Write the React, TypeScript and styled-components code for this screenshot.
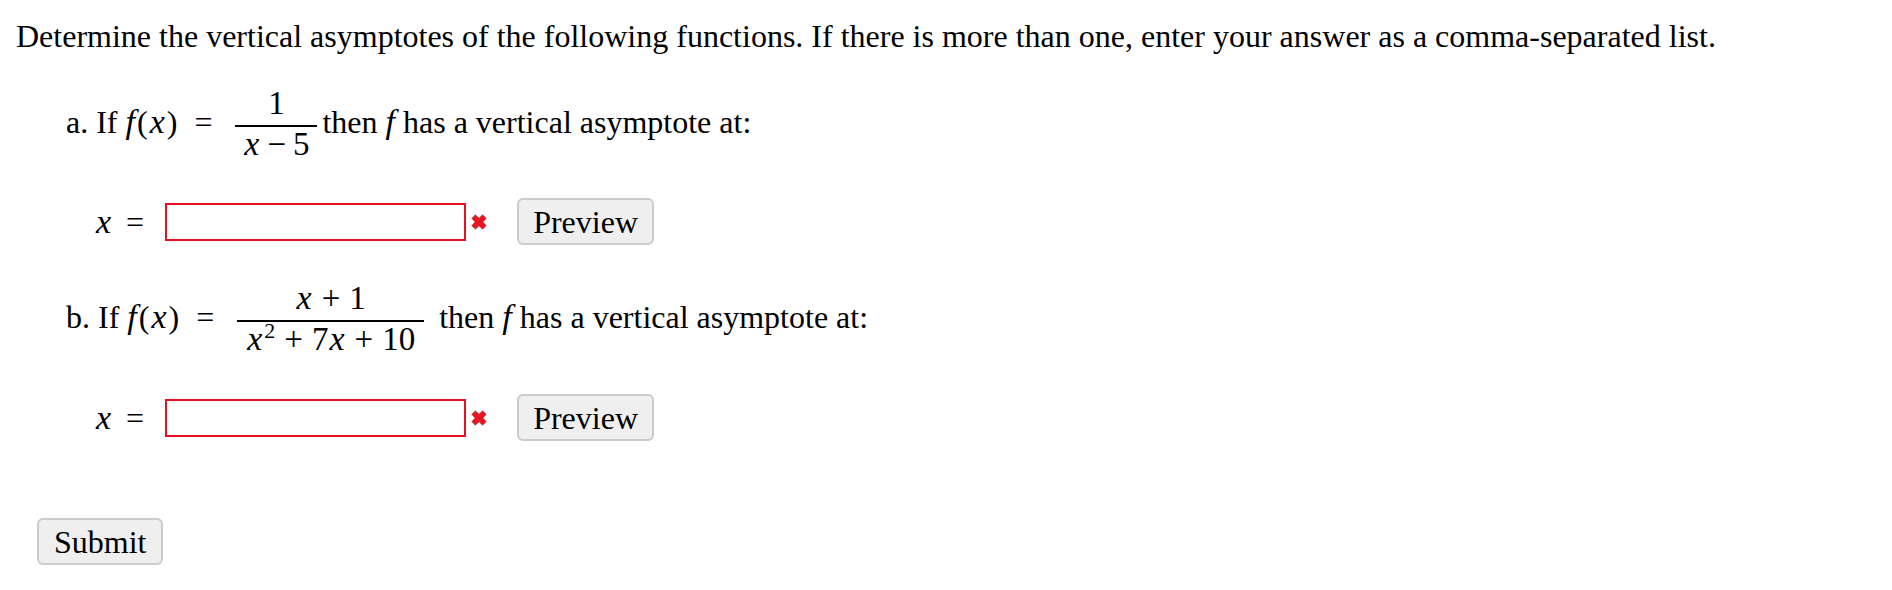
import React from "react"
import styled, { createGlobalStyle } from "styled-components"

const GlobalStyle = createGlobalStyle`
html, body {
    margin: 0;
    background: #fff;
}

body {
    font-family: "Liberation Serif", "Times New Roman", serif;
    font-size: 32px;
    color: #000;
}
`

const Page = styled.div`
    display: flex;
    flex-direction: column;
    align-items: flex-start;
    padding: 18px 16px 0;
`

const Intro = styled.p`
    margin: 0;
    line-height: 36px;
    white-space: nowrap;
`

const Part = styled.div<{ $top: number }>`
    margin-top: ${p => p.$top}px;
    padding-left: 50px;
    line-height: 36px;
    white-space: nowrap;
`

const Var = styled.i<{ $pad?: number }>`
    font-style: italic;
    font-size: 34px;
    margin: 0 ${p => p.$pad ?? 0}px;
`

const Paren = styled.span<{ $left?: number }>`
    margin-left: ${p => p.$left ?? 0}px;
`

const Op = styled.span<{ $left: number, $right: number }>`
    margin: 0 ${p => p.$right}px 0 ${p => p.$left}px;
`

const Sup = styled.sup`
    font-size: 22px;
    line-height: 0;
    vertical-align: 12px;
    margin-left: 1px;
`

const Frac = styled.span<{ $width: number, $after: number }>`
    display: inline-flex;
    flex-direction: column;
    align-items: center;
    vertical-align: middle;
    width: ${p => p.$width}px;
    margin: 0 ${p => p.$after}px 0 23px;
    font-size: 33px;
`

const Num = styled.span`
    line-height: 32px;
    padding-bottom: 6px;
`

const Bar = styled.span`
    align-self: stretch;
    height: 2px;
    background: #000;
`

const Den = styled.span`
    line-height: 32px;
    padding: 1px 0 5px;
`

const AnswerRow = styled.div<{ $top: number }>`
    display: flex;
    align-items: center;
    height: 47px;
    margin-top: ${p => p.$top}px;
    padding-left: 80px;
`

const Label = styled.span`
    display: flex;
    align-items: center;
    line-height: 36px;
`

const AnswerInput = styled.input`
    box-sizing: border-box;
    width: 301px;
    height: 38px;
    margin: 0 0 0 21px;
    padding: 0 4px;
    border: 2px solid #e8101e;
    border-radius: 0;
    outline: none;
    background: #fff;
    font: inherit;
    font-size: 20px;
`

const Mark = styled.svg`
    width: 16px;
    height: 16px;
    margin-left: 5px;
    flex-shrink: 0;
`

const Button = styled.button<{ $left: number }>`
    box-sizing: border-box;
    height: 47px;
    margin-left: ${p => p.$left}px;
    padding: 0 14px;
    border: 2px solid #cbcbcb;
    border-radius: 6px;
    background: #efefef;
    color: #000;
    font: inherit;
    font-size: 32px;
    line-height: 36px;
    cursor: pointer;
`

const SubmitButton = styled(Button)`
    margin-top: 77px;
    padding: 0 15px;
`

const WrongMark = () => (
    <Mark viewBox="0 0 16 16">
        <polygon
            points="1,4.4 4.4,1 8,4.4 11.6,1 15,4.4 11.6,8 15,11.6 11.6,15 8,11.6 4.4,15 1,11.6 4.4,8"
            fill="#ee1521"
            stroke="#9c000b"
            strokeWidth="0.8"
            strokeLinejoin="round"
        />
    </Mark>
)

const FOfX = () => (
    <>
        <Var>f</Var>
        <Paren $left={2}>(</Paren>
        <Var $pad={2}>x</Var>
        <span>)</span>
        <Op $left={17} $right={0}>=</Op>
    </>
)

const Answer = ({ top }: { top: number }) => (
    <AnswerRow $top={top}>
        <Label>
            <Var>x</Var>
            <Op $left={15} $right={0}>=</Op>
        </Label>
        <AnswerInput type="text" aria-label="answer" />
        <WrongMark />
        <Button $left={30}>Preview</Button>
    </AnswerRow>
)

const Tail = () => (
    <>
        then <Var>f</Var> has a vertical asymptote at:
    </>
)

export default function App() {
    return (
        <>
            <GlobalStyle />
            <Page>
                <Intro>
                    Determine the vertical asymptotes of the following functions. If there is more than one, enter your answer as a comma-separated list.
                </Intro>

                <Part $top={33}>
                    a. If <FOfX />
                    <Frac $width={82} $after={5}>
                        <Num>1</Num>
                        <Bar />
                        <Den>
                            <Var $pad={1}>x</Var>
                            <Op $left={7} $right={7}>−</Op>
                            5
                        </Den>
                    </Frac>
                    <Tail />
                </Part>

                <Answer top={33} />

                <Part $top={37}>
                    b. If <FOfX />
                    <Frac $width={187} $after={15}>
                        <Num>
                            <Var $pad={1}>x</Var>
                            <Op $left={9} $right={9}>+</Op>
                            1
                        </Num>
                        <Bar />
                        <Den>
                            <Var $pad={1}>x</Var>
                            <Sup>2</Sup>
                            <Op $left={9} $right={9}>+</Op>
                            7<Var $pad={1}>x</Var>
                            <Op $left={9} $right={9}>+</Op>
                            10
                        </Den>
                    </Frac>
                    <Tail />
                </Part>

                <Answer top={34} />

                <SubmitButton $left={21}>Submit</SubmitButton>
            </Page>
        </>
    )
}
